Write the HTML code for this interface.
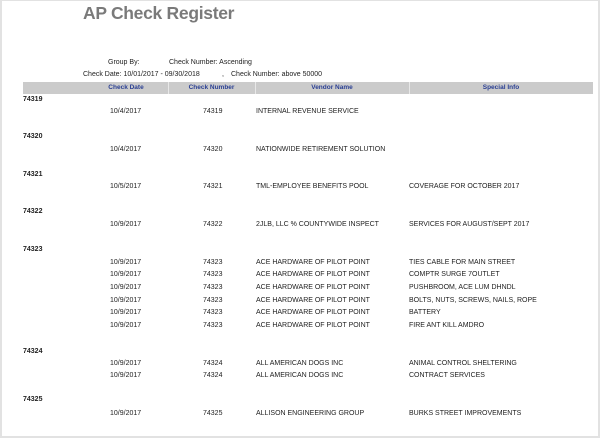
<!DOCTYPE html>
<html><head><meta charset="utf-8"><style>
html,body{margin:0;padding:0;background:#fff}
body{width:600px;height:438px;position:relative;overflow:hidden;font-family:"Liberation Sans",sans-serif;color:#222;font-size:7px}
.frame{position:absolute;left:0;top:0;width:596px;height:435px;border:2px solid #e2e2e2;border-top:1px solid #e2e2e2}
.t{position:absolute;white-space:nowrap;line-height:10px;height:10px}
.title{position:absolute;left:83px;top:2px;font-size:17.5px;font-weight:bold;color:#7a7a7a;line-height:22px;letter-spacing:-0.3px}
.bar{position:absolute;left:23px;top:82px;width:570px;height:12px;background:#cbcbcb}
.sep{position:absolute;top:82px;width:1px;height:12px;background:#e8e8e8}
.h{position:absolute;top:83px;line-height:10px;color:#2a3f93;font-weight:bold;text-align:center;font-size:6.5px}
.g{font-weight:bold;left:23px}
.d{left:110px}.n{left:203px}.v{left:256px}.s{left:409px}
</style></head><body>
<div class="frame"></div>
<div class="title">AP Check Register</div>
<div class="t" style="left:108px;top:58px">Group By:</div>
<div class="t" style="left:169px;top:58px">Check Number: Ascending</div>
<div class="t" style="left:83px;top:70px">Check Date: 10/01/2017 - 09/30/2018</div>
<div class="t" style="left:222px;top:70px">,</div>
<div class="t" style="left:231px;top:70px">Check Number: above 50000</div>
<div class="bar"></div>
<div class="sep" style="left:168px"></div>
<div class="sep" style="left:255px"></div>
<div class="sep" style="left:409px"></div>
<div class="h" style="left:84px;width:84px">Check Date</div>
<div class="h" style="left:168px;width:87px">Check Number</div>
<div class="h" style="left:255px;width:154px">Vendor Name</div>
<div class="h" style="left:409px;width:184px">Special Info</div>

<div class="t g" style="top:95px">74319</div>
<div class="t d" style="top:107px">10/4/2017</div><div class="t n" style="top:107px">74319</div><div class="t v" style="top:107px">INTERNAL REVENUE SERVICE</div>

<div class="t g" style="top:132px">74320</div>
<div class="t d" style="top:145px">10/4/2017</div><div class="t n" style="top:145px">74320</div><div class="t v" style="top:145px">NATIONWIDE RETIREMENT SOLUTION</div>

<div class="t g" style="top:170px">74321</div>
<div class="t d" style="top:182px">10/5/2017</div><div class="t n" style="top:182px">74321</div><div class="t v" style="top:182px">TML-EMPLOYEE BENEFITS POOL</div><div class="t s" style="top:182px">COVERAGE FOR OCTOBER 2017</div>

<div class="t g" style="top:207px">74322</div>
<div class="t d" style="top:220px">10/9/2017</div><div class="t n" style="top:220px">74322</div><div class="t v" style="top:220px">2JLB, LLC % COUNTYWIDE INSPECT</div><div class="t s" style="top:220px">SERVICES FOR AUGUST/SEPT 2017</div>

<div class="t g" style="top:245px">74323</div>
<div class="t d" style="top:258px">10/9/2017</div><div class="t n" style="top:258px">74323</div><div class="t v" style="top:258px">ACE HARDWARE OF PILOT POINT</div><div class="t s" style="top:258px">TIES CABLE FOR MAIN STREET</div>
<div class="t d" style="top:270px">10/9/2017</div><div class="t n" style="top:270px">74323</div><div class="t v" style="top:270px">ACE HARDWARE OF PILOT POINT</div><div class="t s" style="top:270px">COMPTR SURGE 7OUTLET</div>
<div class="t d" style="top:283px">10/9/2017</div><div class="t n" style="top:283px">74323</div><div class="t v" style="top:283px">ACE HARDWARE OF PILOT POINT</div><div class="t s" style="top:283px">PUSHBROOM, ACE LUM DHNDL</div>
<div class="t d" style="top:296px">10/9/2017</div><div class="t n" style="top:296px">74323</div><div class="t v" style="top:296px">ACE HARDWARE OF PILOT POINT</div><div class="t s" style="top:296px">BOLTS, NUTS, SCREWS, NAILS, ROPE</div>
<div class="t d" style="top:308px">10/9/2017</div><div class="t n" style="top:308px">74323</div><div class="t v" style="top:308px">ACE HARDWARE OF PILOT POINT</div><div class="t s" style="top:308px">BATTERY</div>
<div class="t d" style="top:321px">10/9/2017</div><div class="t n" style="top:321px">74323</div><div class="t v" style="top:321px">ACE HARDWARE OF PILOT POINT</div><div class="t s" style="top:321px">FIRE ANT KILL AMDRO</div>

<div class="t g" style="top:347px">74324</div>
<div class="t d" style="top:359px">10/9/2017</div><div class="t n" style="top:359px">74324</div><div class="t v" style="top:359px">ALL AMERICAN DOGS INC</div><div class="t s" style="top:359px">ANIMAL CONTROL SHELTERING</div>
<div class="t d" style="top:371px">10/9/2017</div><div class="t n" style="top:371px">74324</div><div class="t v" style="top:371px">ALL AMERICAN DOGS INC</div><div class="t s" style="top:371px">CONTRACT SERVICES</div>

<div class="t g" style="top:395px">74325</div>
<div class="t d" style="top:409px">10/9/2017</div><div class="t n" style="top:409px">74325</div><div class="t v" style="top:409px">ALLISON ENGINEERING GROUP</div><div class="t s" style="top:409px">BURKS STREET IMPROVEMENTS</div>
</body></html>
